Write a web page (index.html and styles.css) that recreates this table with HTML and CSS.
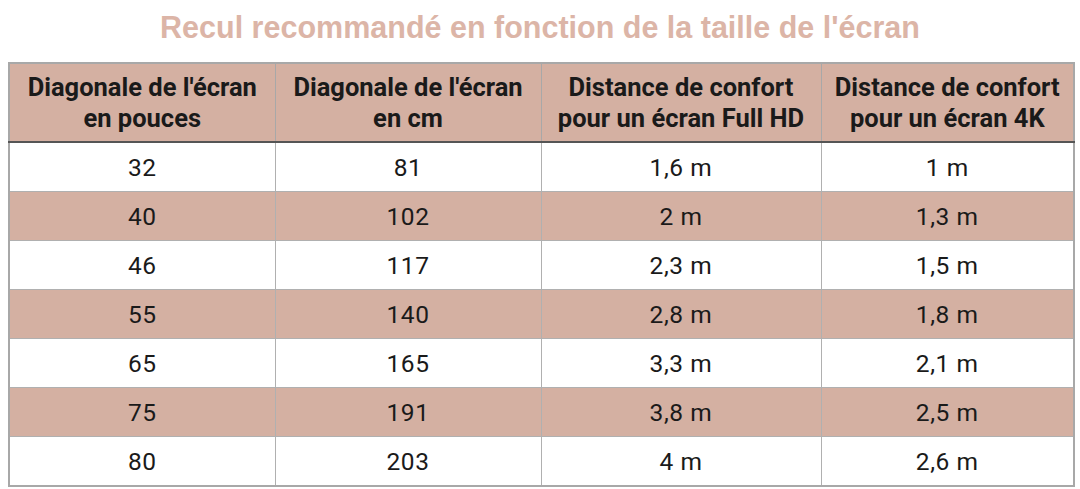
FILE: index.html
```html
<!DOCTYPE html>
<html lang="fr">
<head>
<meta charset="utf-8">
<link rel="stylesheet" href="styles.css">
</head>
<body>
<div class="page">
  <h1 class="title">Recul recommandé en fonction de la taille de l'écran</h1>
  <table class="grid">
    <colgroup>
      <col class="c1"><col class="c2"><col class="c3"><col class="c4">
    </colgroup>
    <thead>
      <tr>
        <th>Diagonale de l'écran<br>en pouces</th>
        <th>Diagonale de l'écran<br>en cm</th>
        <th>Distance de confort<br>pour un écran Full HD</th>
        <th>Distance de confort<br>pour un écran 4K</th>
      </tr>
    </thead>
    <tbody>
      <tr><td>32</td><td>81</td><td>1,6 m</td><td>1 m</td></tr>
      <tr class="alt"><td>40</td><td>102</td><td>2 m</td><td>1,3 m</td></tr>
      <tr><td>46</td><td>117</td><td>2,3 m</td><td>1,5 m</td></tr>
      <tr class="alt"><td>55</td><td>140</td><td>2,8 m</td><td>1,8 m</td></tr>
      <tr><td>65</td><td>165</td><td>3,3 m</td><td>2,1 m</td></tr>
      <tr class="alt"><td>75</td><td>191</td><td>3,8 m</td><td>2,5 m</td></tr>
      <tr><td>80</td><td>203</td><td>4 m</td><td>2,6 m</td></tr>
    </tbody>
  </table>
</div>
</body>
</html>
```

FILE: styles.css
```css
html, body {
  margin: 0;
  padding: 0;
  background: #ffffff;
}
.page {
  padding: 8px 8px 0 8px;
}
.title {
  margin: 0;
  height: 54px;
  line-height: 38px;
  text-align: center;
  font-family: "Liberation Sans", Arial, sans-serif;
  font-weight: 700;
  font-size: 30.5px;
  color: #dcb5a7;
}
.grid {
  width: 1065px;
  table-layout: fixed;
  border-collapse: collapse;
  font-family: Roboto, "Noto Sans", sans-serif;
  color: #1a1a1a;
  border: 2px solid #a8a8a8;
}
.c1 { width: 266px; }
.c2 { width: 266px; }
.c3 { width: 280px; }
.c4 { width: 253px; }
.grid th {
  background: #d4b0a2;
  font-weight: 700;
  font-size: 25.5px;
  line-height: 31px;
  height: 77px;
  padding: 0;
  white-space: nowrap;
  border: 1px solid #a8a8a8;
  border-bottom: 2px solid #555555;
}
.grid td {
  text-align: center;
  font-size: 24.5px;
  letter-spacing: 0.6px;
  height: 48px;
  padding: 0;
  border: 1px solid #b0b0b0;
}
.grid tr.alt td {
  background: #d4b0a2;
}
```
